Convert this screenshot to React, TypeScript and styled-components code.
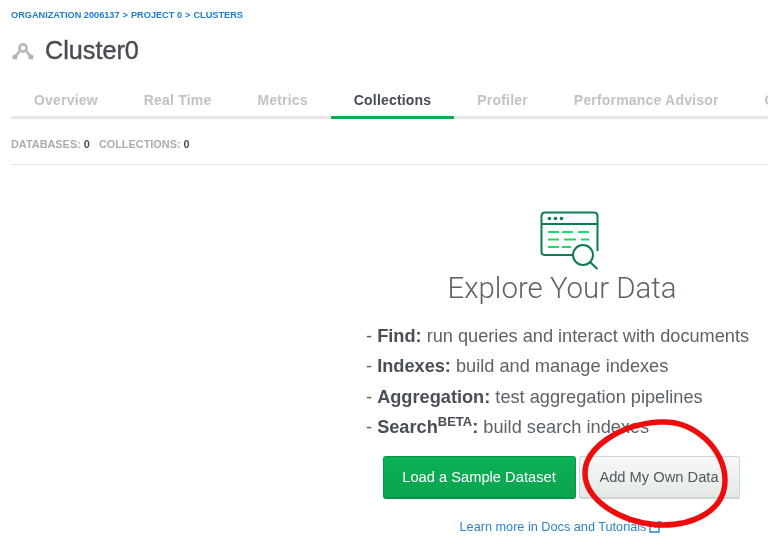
import React from 'react';
import styled, { createGlobalStyle } from 'styled-components';

const GlobalStyle = createGlobalStyle`
  html, body {
    margin: 0;
    padding: 0;
    background: #fff;
  }
  body {
    font-family: 'Liberation Sans', Arial, sans-serif;
    color: #494f55;
  }
`;

const Page = styled.div`
  position: relative;
  width: 768px;
  height: 545px;
  overflow: hidden;
  padding: 10px 0 0 11px;
  box-sizing: border-box;
  filter: blur(0.4px);
`;

const Breadcrumbs = styled.div`
  display: flex;
  gap: 3px;
  height: 11px;
  line-height: 11px;
  font-size: 9.2px;
  font-weight: 700;
  color: #1f7ccf;
  white-space: nowrap;
`;

const TitleRow = styled.div`
  display: flex;
  align-items: center;
  gap: 10px;
  margin-top: 14px;
  height: 30px;
`;

const Title = styled.h1`
  margin: 0;
  font-size: 25.2px;
  font-weight: 400;
  -webkit-text-stroke: 0.4px #464c52;
  color: #464c52;
`;

const Tabs = styled.nav`
  display: flex;
  margin-top: 19px;
  width: 800px;
  border-bottom: 3px solid #e7e7e7;
`;

const Tab = styled.div<{ $active?: boolean }>`
  padding: 0 23px;
  height: 32px;
  line-height: 32px;
  margin-bottom: -3px;
  font-size: 14px;
  font-weight: 700;
  letter-spacing: 0.19px;
  white-space: nowrap;
  color: ${p => (p.$active ? '#464c52' : '#c2c2c2')};
  border-bottom: 3px solid ${p => (p.$active ? '#13aa52' : 'transparent')};
`;

const Stats = styled.div`
  display: flex;
  gap: 9px;
  height: 45px;
  line-height: 50px;
  font-size: 10.9px;
  font-weight: 700;
  color: #a9adb0;
  border-bottom: 1px solid #e1e5e4;
  white-space: nowrap;
`;

const Count = styled.span`
  color: #464c52;
`;

const EmptyState = styled.section`
  display: flex;
  flex-direction: column;
  align-items: center;
  width: 392px;
  margin: 46px 0 0 355px;
`;

const IconWrap = styled.div`
  display: flex;
  margin-left: 16px;
`;

const Heading = styled.h2`
  margin: -1px 0 0 0;
  height: 36px;
  line-height: 36px;
  font-size: 29.4px;
  font-weight: 300;
  font-family: Roboto, 'Liberation Sans', sans-serif;
  color: #5b6268;
  white-space: nowrap;
`;

const Features = styled.ul`
  list-style: none;
  align-self: stretch;
  margin: 15px 0 0 0;
  padding: 0;
`;

const Feature = styled.li`
  height: 30.4px;
  line-height: 30px;
  font-size: 18.2px;
  color: #5b6268;
  white-space: nowrap;

  b {
    color: #494f55;
  }

  sup {
    font-size: 13px;
    line-height: 0;
    font-weight: 700;
  }
`;

const Actions = styled.div`
  display: flex;
  gap: 3px;
  margin: 13px 0 0 -2px;
`;

const Button = styled.button<{ $primary?: boolean }>`
  height: 43px;
  width: ${p => (p.$primary ? '193px' : '161px')};
  padding: 0;
  border-radius: 3px;
  font-family: inherit;
  font-size: 14.7px;
  color: ${p => (p.$primary ? '#fff' : '#515a60')};
  border: 1px solid ${p => (p.$primary ? '#09934a' : '#cfd8d6')};
  border-bottom-width: 2px;
  background: ${p =>
    p.$primary
      ? 'linear-gradient(#0cb257, #0aa34e)'
      : 'linear-gradient(#f6f8f7, #e4e9e7)'};
`;

const DocsLink = styled.a`
  display: flex;
  align-items: center;
  gap: 3px;
  margin: 20px 0 0 -2px;
  font-size: 12.7px;
  line-height: 16px;
  color: #2e82cf;
  white-space: nowrap;
`;

const Annotation = styled.svg`
  position: absolute;
  left: 570px;
  top: 410px;
  pointer-events: none;
`;

const ClusterIcon = () => (
  <svg width="24" height="20" viewBox="0 0 24 20" fill="none">
    <path d="M4 17 L9.500 10 M14.500 10 L20 17" stroke="#b8b8b8" strokeWidth="2.800" />
    <circle cx="12" cy="8" r="3.600" stroke="#b8b8b8" strokeWidth="2.600" />
    <circle cx="4" cy="17" r="2.600" fill="#b8b8b8" />
    <circle cx="20" cy="17" r="2.600" fill="#b8b8b8" />
  </svg>
);

const ExploreIcon = () => (
  <svg width="60" height="60" viewBox="0 0 60 60" fill="none">
    <path
      d="M41 44 H5 Q1.500 44 1.500 40.500 V5 Q1.500 1.500 5 1.500 H54 Q57.500 1.500 57.500 5 V40"
      stroke="#0f7a58"
      strokeWidth="2"
    />
    <path d="M1.500 13 H57.500" stroke="#0f7a58" strokeWidth="2" />
    <circle cx="9.500" cy="7.500" r="1.800" fill="#0f7a58" />
    <circle cx="15.500" cy="7.500" r="1.800" fill="#0f7a58" />
    <circle cx="21.500" cy="7.500" r="1.800" fill="#0f7a58" />
    <path
      d="M8 21 H19 M22 21 H33 M38 21 H49 M8 28.500 H19 M24 28.500 H36 M41 28.500 H49 M8 36 H19 M22 36 H31"
      stroke="#16dc6e"
      strokeWidth="2"
    />
    <circle cx="43" cy="44" r="10" fill="#fff" stroke="#0f7a58" strokeWidth="2" />
    <path d="M50 51 L57.500 58" stroke="#0f7a58" strokeWidth="2.200" />
  </svg>
);

const ExternalIcon = () => (
  <svg width="13" height="12" viewBox="0 0 13 12" fill="none">
    <path d="M8 3 H1 V11 H10 V6" stroke="#2e82cf" strokeWidth="1.400" />
    <path d="M6 6.500 L11.500 1.500 M8 1 H12 V4.500" stroke="#2e82cf" strokeWidth="1.400" />
  </svg>
);

const TABS = ['Overview', 'Real Time', 'Metrics', 'Collections', 'Profiler', 'Performance Advisor', 'Connect'];

const App = () => (
  <>
    <GlobalStyle />
    <Page>
      <Breadcrumbs>
        <span>ORGANIZATION 2006137</span>
        <span>&gt;</span>
        <span>PROJECT 0</span>
        <span>&gt;</span>
        <span>CLUSTERS</span>
      </Breadcrumbs>
      <TitleRow>
        <ClusterIcon />
        <Title>Cluster0</Title>
      </TitleRow>
      <Tabs>
        {TABS.map(name => (
          <Tab key={name} $active={name === 'Collections'}>
            {name}
          </Tab>
        ))}
      </Tabs>
      <Stats>
        <span>
          DATABASES: <Count>0</Count>
        </span>
        <span>
          COLLECTIONS: <Count>0</Count>
        </span>
      </Stats>
      <EmptyState>
        <IconWrap>
          <ExploreIcon />
        </IconWrap>
        <Heading>Explore Your Data</Heading>
        <Features>
          <Feature>
            - <b>Find:</b> run queries and interact with documents
          </Feature>
          <Feature>
            - <b>Indexes:</b> build and manage indexes
          </Feature>
          <Feature>
            - <b>Aggregation:</b> test aggregation pipelines
          </Feature>
          <Feature>
            - <b>Search<sup>BETA</sup>:</b> build search indexes
          </Feature>
        </Features>
        <Actions>
          <Button $primary>Load a Sample Dataset</Button>
          <Button>Add My Own Data</Button>
        </Actions>
        <DocsLink>
          Learn more in Docs and Tutorials
          <ExternalIcon />
        </DocsLink>
      </EmptyState>
      <Annotation width="170" height="125" viewBox="0 0 170 125" fill="none">
        <path
          d="M90 12 C125 10 155 40 155 70 C155 100 125 116 88 115 C50 112 15 90 15 63 C15 38 50 14 90 12 Z"
          stroke="#ee0d0d"
          strokeWidth="5.500"
        />
      </Annotation>
    </Page>
  </>
);

export default App;
